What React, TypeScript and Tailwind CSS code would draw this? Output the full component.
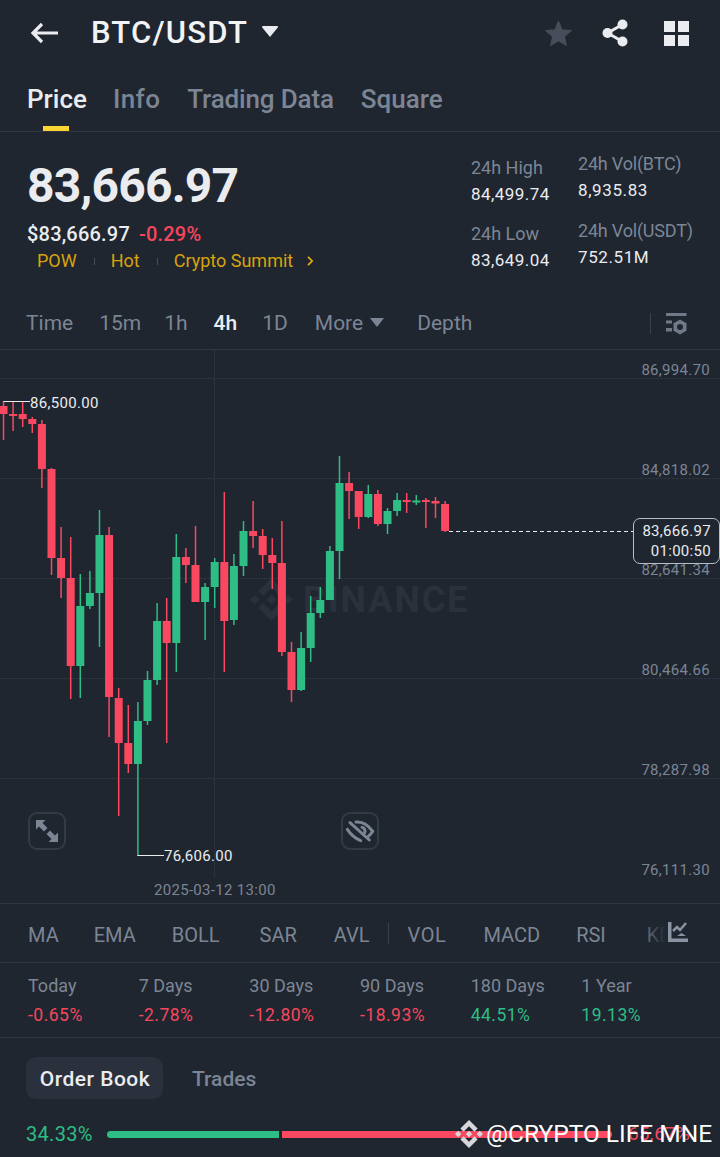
// App.tsx
const font = { fontFamily: "Roboto, 'Noto Sans', sans-serif" };

// [wickTop, wickBottom, bodyTop, bodyBottom, colour]
type Candle = [number, number, number, number, "r" | "g"];
const candles: Candle[] = [
  [401, 440, 406, 414, "r"],
  [402, 431, 414, 416, "r"],
  [401, 427, 414, 419, "r"],
  [417, 433, 419, 424, "r"],
  [420, 488, 424, 469, "r"],
  [468, 575, 469, 558, "r"],
  [527, 598, 558, 578, "r"],
  [537, 699, 578, 666, "r"],
  [574, 698, 606, 666, "g"],
  [571, 609, 593, 606, "g"],
  [510, 647, 535, 593, "g"],
  [527, 737, 535, 697, "r"],
  [688, 816, 698, 743, "r"],
  [705, 773, 743, 764, "r"],
  [702, 856, 721, 764, "g"],
  [671, 725, 680, 721, "g"],
  [603, 685, 621, 680, "g"],
  [598, 743, 621, 643, "r"],
  [534, 672, 557, 643, "g"],
  [548, 583, 557, 565, "r"],
  [526, 602, 565, 602, "r"],
  [583, 640, 587, 602, "g"],
  [558, 608, 562, 587, "g"],
  [492, 672, 562, 621, "r"],
  [554, 625, 566, 620, "g"],
  [521, 576, 531, 566, "g"],
  [501, 548, 531, 536, "r"],
  [529, 569, 536, 555, "r"],
  [538, 589, 555, 563, "r"],
  [521, 656, 563, 652, "r"],
  [642, 702, 652, 690, "r"],
  [632, 691, 648, 690, "g"],
  [596, 662, 613, 648, "g"],
  [587, 618, 600, 613, "g"],
  [546, 600, 551, 600, "g"],
  [456, 579, 483, 551, "g"],
  [472, 519, 483, 491, "r"],
  [491, 529, 491, 517, "r"],
  [485, 518, 494, 517, "g"],
  [490, 526, 494, 524, "r"],
  [508, 534, 511, 524, "g"],
  [493, 516, 500, 511, "g"],
  [493, 513, 500, 502, "r"],
  [495, 505, 500.5, 502.5, "g"],
  [498, 528, 500, 502, "r"],
  [497, 518, 501, 503.5, "r"],
  [501, 532, 504, 531, "r"],
];

const axisLabels = [
  { label: "86,994.70", y: "top-[11px]" },
  { label: "84,818.02", y: "top-[111px]" },
  { label: "82,641.34", y: "top-[211px]" },
  { label: "80,464.66", y: "top-[311px]" },
  { label: "78,287.98", y: "top-[411px]" },
  { label: "76,111.30", y: "top-[511px]" },
];

const stats = [
  { name: "Today", value: "-0.65%", up: false },
  { name: "7 Days", value: "-2.78%", up: false },
  { name: "30 Days", value: "-12.80%", up: false },
  { name: "90 Days", value: "-18.93%", up: false },
  { name: "180 Days", value: "44.51%", up: true },
  { name: "1 Year", value: "19.13%", up: true },
];

const BinanceLogo = ({ className }: { className: string }) => (
  <svg viewBox="0 0 126.61 126.61" className={className} fill="currentColor">
    <path d="M38.73 53.2l24.59-24.58 24.6 24.6 14.3-14.31L63.32 0 24.43 38.9z" />
    <path d="M0 63.31l14.3-14.31 14.31 14.31-14.31 14.3z" />
    <path d="M38.73 73.41l24.59 24.59 24.6-24.6 14.31 14.29-38.9 38.91-38.91-38.88z" />
    <path d="M98 63.31L112.3 49l14.31 14.3-14.31 14.32z" />
    <path d="M77.83 63.3L63.32 48.78 52.59 59.51l-1.24 1.23-2.54 2.54 14.51 14.52 14.51-14.47z" />
  </svg>
);

const Header = () => (
  <div className="flex h-[66px] items-center pl-[30px] pr-[31px]">
    <svg viewBox="0 0 28 22" className="h-[22px] w-[28px] text-[#eaecef]" fill="none" stroke="currentColor" strokeWidth="3.2">
      <path d="M28 11H3M12 2l-9 9 9 9" />
    </svg>
    <span className="ml-[33px] text-[31px] font-medium tracking-[1.2px] text-[#f2f3f5]">BTC/USDT</span>
    <svg viewBox="0 0 16 11" className="ml-[14px] mb-[3px] h-[11px] w-[16px] text-[#eaecef]" fill="currentColor">
      <path d="M1 0h14a1 1 0 01.8 1.600L8 11 .2 1.600A1 1 0 011 0z" />
    </svg>
    <div className="ml-auto flex items-center">
      <svg viewBox="0 0 24 24" className="h-[29px] w-[29px] text-[#474d5a]" fill="currentColor" stroke="currentColor" strokeWidth="1" strokeLinejoin="round">
        <path d="M12 2l3 7 7.500.6-5.700 4.900 1.700 7.300L12 18l-6.500 3.800 1.700-7.300L1.500 9.600 9 9z" />
      </svg>
      <svg viewBox="0 0 26 28" className="ml-[29px] h-[28px] w-[26px] text-[#eaecef]" fill="currentColor">
        <circle cx="20.500" cy="5.500" r="5" />
        <circle cx="5.500" cy="14" r="5" />
        <circle cx="20.500" cy="22.500" r="5" />
        <path d="M5.500 14L20.500 5.500M5.500 14l15 8.500" stroke="currentColor" strokeWidth="3" />
      </svg>
      <div className="ml-[36px] grid grid-cols-2 gap-[3px]">
        <div className="h-[11px] w-[11px] bg-[#eaecef]" />
        <div className="h-[11px] w-[11px] bg-[#eaecef]" />
        <div className="h-[11px] w-[11px] bg-[#eaecef]" />
        <div className="h-[11px] w-[11px] bg-[#eaecef]" />
      </div>
    </div>
  </div>
);

const Tabs = () => (
  <div className="flex h-[66px] border-b border-[#2f3642] pl-[27px] text-[26px] font-medium text-[#7c8594]">
    <div className="relative pt-[14px] text-[#eaecef]">
      Price
      <div className="absolute bottom-[0px] left-[16px] h-[5px] w-[26px] bg-[#fcd535]" />
    </div>
    <div className="ml-[26px] pt-[14px] tracking-[0.4px]">Info</div>
    <div className="ml-[27px] pt-[14px] tracking-[-0.15px]">Trading Data</div>
    <div className="ml-[27px] pt-[14px]">Square</div>
  </div>
);

const Summary = () => (
  <div className="flex h-[166px]">
    <div className="w-[471px] pl-[27px]">
      <div className="mt-[21px] text-[48px] leading-[66px] font-bold tracking-[-0.8px] text-[#eaecef]">83,666.97</div>
      <div className="mt-[2px] flex items-center text-[20px] leading-[26px] font-medium tracking-[0.2px]">
        <span className="text-[#eaecef]">$83,666.97</span>
        <span className="ml-[9px] text-[#f6465d]">-0.29%</span>
      </div>
      <div className="mt-[2px] flex items-center pl-[10px] text-[18px] leading-[24px] text-[#d9a20d]">
        <span>POW</span>
        <div className="ml-[17px] h-[7px] w-px bg-[#474d5a]" />
        <span className="ml-[16px]">Hot</span>
        <div className="ml-[17px] h-[7px] w-px bg-[#474d5a]" />
        <span className="ml-[16px]">Crypto Summit</span>
        <svg viewBox="0 0 8 12" className="ml-[14px] h-[10px] w-[7px]" fill="none" stroke="#e8ae12" strokeWidth="2">
          <path d="M1 1l5 5-5 5" />
        </svg>
      </div>
    </div>
    <div className="w-[107px] pt-[24px]">
      <div className="text-[18px] leading-[24px] text-[#7c8594]">24h High</div>
      <div className="mt-[2px] text-[17px] leading-[24px] tracking-[0.45px] text-[#eaecef]">84,499.74</div>
      <div className="mt-[16px] text-[18px] leading-[24px] text-[#7c8594]">24h Low</div>
      <div className="mt-[2px] text-[17px] leading-[24px] tracking-[0.45px] text-[#eaecef]">83,649.04</div>
    </div>
    <div className="pt-[20px]">
      <div className="text-[18px] leading-[24px] tracking-[-0.2px] text-[#7c8594]">24h Vol(BTC)</div>
      <div className="mt-[2px] text-[17px] leading-[24px] tracking-[0.6px] text-[#eaecef]">8,935.83</div>
      <div className="mt-[17px] text-[18px] leading-[24px] tracking-[-0.2px] text-[#7c8594]">24h Vol(USDT)</div>
      <div className="mt-[2px] text-[17px] leading-[24px] tracking-[0.6px] text-[#eaecef]">752.51M</div>
    </div>
  </div>
);

const ChartToolbar = () => (
  <div className="flex h-[52px] items-center border-b border-[#2f3642] pl-[26px] text-[21px] text-[#7c8594]">
    <span>Time</span>
    <span className="ml-[26px]">15m</span>
    <span className="ml-[23px]">1h</span>
    <span className="ml-[26px] font-medium text-[#eaecef]">4h</span>
    <span className="ml-[25px]">1D</span>
    <span className="ml-[27px]">More</span>
    <svg viewBox="0 0 14 9" className="ml-[7px] mb-[3px] h-[9px] w-[14px]" fill="#7c8594">
      <path d="M0 0h14L7 9z" />
    </svg>
    <span className="ml-[33px]">Depth</span>
    <div className="ml-auto h-[21px] w-px bg-[#3a414e]" />
    <svg viewBox="0 0 21 22" className="ml-[15px] mr-[33px] h-[22px] w-[21px]" fill="#717988">
      <path d="M0 0h20.500v3H0zM0 7.500h6v3H0zM0 15h6v3.500H0z" />
      <path fillRule="evenodd" d="M14 6.500l6.500 3.750v7.500L14 21.500l-6.500-3.750v-7.500zM14 11a3 3 0 100 6 3 3 0 000-6z" />
    </svg>
  </div>
);

const Chart = () => (
  <div className="relative h-[528px]">
    <div className="absolute left-[250px] top-[228px] flex items-center text-[#2b313c]">
      <BinanceLogo className="h-[43px] w-[43px]" />
      <span className="ml-[10px] text-[36px] leading-[36px] font-bold tracking-[2px]">BINANCE</span>
    </div>
    <svg viewBox="0 350 720 528" className="absolute inset-0 h-[528px] w-[720px]">
      {[378.500, 478.500, 578.500, 678.500, 778.500, 878.500].map((y) => (
        <line key={y} x1="0" x2="720" y1={y} y2={y} stroke="#2f3642" strokeWidth="1" strokeDasharray="3 1" />
      ))}
      <line x1="214.500" x2="214.500" y1="350" y2="878" stroke="#2f3642" strokeWidth="1" strokeDasharray="3 1" />
      {candles.map(([wt, wb, bt, bb, c], i) => {
        const x = 3.500 + i * 9.600;
        const color = c === "r" ? "#fb4861" : "#2ebd85";
        return (
          <g key={i}>
            <rect x={x - 0.750} y={wt} width="1.500" height={wb - wt} fill={color} />
            <rect x={x - 4} y={bt} width="8" height={bb - bt} fill={color} />
          </g>
        );
      })}
      <path d="M3.500 401.500H30" stroke="#eaecef" strokeWidth="1" fill="none" />
      <path d="M137.500 855.500H164" stroke="#eaecef" strokeWidth="1" fill="none" />
      <path d="M449 531.500H633" stroke="#eaecef" strokeWidth="1" strokeDasharray="4 3" fill="none" />
    </svg>
    {axisLabels.map((a) => (
      <div key={a.label} className={`absolute right-[10px] text-[15px] leading-[18px] tracking-[0.3px] text-[#7c8594] ${a.y}`}>
        {a.label}
      </div>
    ))}
    <div className="absolute left-[30px] top-[44px] text-[15px] leading-[18px] tracking-[0.3px] text-[#eaecef]">86,500.00</div>
    <div className="absolute left-[164px] top-[497px] text-[15px] leading-[18px] tracking-[0.3px] text-[#eaecef]">76,606.00</div>
    <div className="absolute left-[633px] top-[168px] flex h-[46px] w-[87px] flex-col items-end justify-center rounded-[7px] border border-[#b7bdc6] bg-[#1f2630] pr-[8px] text-[15px] leading-[20px] tracking-[0.3px] text-[#eaecef]">
      <div>83,666.97</div>
      <div>01:00:50</div>
    </div>
    <div className="absolute left-[28px] top-[462px] flex h-[38px] w-[38px] items-center justify-center rounded-[9px] border-2 border-[#333a46]">
      <svg viewBox="0 0 22 22" className="h-[22px] w-[22px]" fill="#7c8594">
        <path d="M0 0h9.500L6.500 3l5 5L8 11.500l-5-5-3 3z" />
        <path d="M22 22h-9.500l3-3-5-5 3.500-3.500 5 5 3-3z" />
      </svg>
    </div>
    <div className="absolute left-[341px] top-[462px] h-[38px] w-[38px] rounded-[9px] border-2 border-[#333a46]">
      <svg viewBox="39 26 102 102" className="h-[34px] w-[34px]" fill="none" stroke="#7c8594" strokeWidth="9" strokeLinecap="round">
        <path d="M60 52L118 104" />
        <path d="M78 50Q106 47 128 78" />
        <path d="M128 78Q122 88 114 94" />
        <path d="M52 72Q68 96 92 106" />
        <path d="M96 66Q108 70 104 82" />
      </svg>
    </div>
  </div>
);

const DateRow = () => (
  <div className="relative h-[26px] border-b border-[#2f3642]">
    <div className="absolute left-[154px] top-[3px] text-[15px] leading-[18px] tracking-[0.3px] text-[#7c8594]">2025-03-12 13:00</div>
  </div>
);

const Indicators = () => (
  <div className="relative flex h-[59px] items-center overflow-hidden border-b border-[#2f3642] pl-[28px] pt-[4px] text-[20px] text-[#7c8594]">
    <span>MA</span>
    <span className="ml-[35px]">EMA</span>
    <span className="ml-[36px]">BOLL</span>
    <span className="ml-[40px]">SAR</span>
    <span className="ml-[37px]">AVL</span>
    <div className="ml-[19px] mb-[4px] h-[21px] w-px bg-[#3a414e]" />
    <span className="ml-[18px] tracking-[0.6px]">VOL</span>
    <span className="ml-[37px]">MACD</span>
    <span className="ml-[36px]">RSI</span>
    <span className="ml-[41px]">KDJ</span>
    <div className="absolute right-[54px] top-0 h-full w-[22px] bg-gradient-to-r from-[#1f2630]/20 to-[#1f2630]" />
    <div className="absolute right-0 top-0 flex h-full w-[54px] items-center bg-[#1f2630] pl-[2px]">
      <svg viewBox="0 0 20 20" className="mb-[3px] h-[20px] w-[20px]" fill="none" stroke="#8a93a2" strokeWidth="3.500">
        <path d="M1.750 0v18.250H20" />
        <path d="M5 9l4-4 3 3 6-7" strokeWidth="2.500" />
        <path d="M9 14l4.500-3 4.500 3z" fill="#8a93a2" stroke="none" />
      </svg>
    </div>
  </div>
);

const Stats = () => (
  <div className="flex h-[75px] flex-col justify-center border-b border-[#2f3642] pl-[28px]">
    <div className="grid w-[664px] grid-cols-6">
      {stats.map((s) => (
        <div key={s.name}>
          <div className="text-[18px] leading-[24px] text-[#7c8594]">{s.name}</div>
          <div className={s.up ? "mt-[5px] text-[17.500px] leading-[24px] tracking-[0.5px] text-[#2ebd85]" : "mt-[5px] text-[17.500px] leading-[24px] tracking-[0.5px] text-[#f6465d]"}>
            {s.value}
          </div>
        </div>
      ))}
    </div>
  </div>
);

const OrderBook = () => (
  <div className="px-[26px] pt-[19px]">
    <div className="flex items-center">
      <div className="flex h-[42px] w-[137px] items-center justify-center rounded-[10px] bg-[#2a303c] pl-[1px] pt-[3px] text-[21px] font-medium tracking-[0.5px] text-[#eaecef]">
        Order Book
      </div>
      <span className="ml-[29px] pt-[3px] text-[21px] font-medium text-[#7c8594]">Trades</span>
    </div>
    <div className="mt-[22px] flex items-center">
      <span className="w-[66px] text-[20px] leading-[26px] tracking-[0.3px] text-[#2ebd85]">34.33%</span>
      <div className="ml-[15px] flex h-[7px] w-[505px] gap-[3px]">
        <div className="h-full w-[172px] rounded-l-full bg-[#2ebd85]" />
        <div className="h-full flex-1 rounded-r-full bg-[#fb4861]" />
      </div>
      <span className="ml-[16px] text-[19px] leading-[26px] text-[#f6465d]">65.67%</span>
    </div>
  </div>
);

export default function App() {
  return (
    <div className="relative h-[1157px] w-[720px] overflow-hidden bg-[#1f2630]" style={font}>
      <Header />
      <Tabs />
      <Summary />
      <ChartToolbar />
      <Chart />
      <DateRow />
      <Indicators />
      <Stats />
      <OrderBook />
      <div className="absolute bottom-[7px] left-[455px] flex items-center text-white">
        <BinanceLogo className="h-[28px] w-[28px] text-[#d5d7da]" />
        <span className="ml-[3px] text-[24.500px] leading-[32px]">@CRYPTO LIFE MNE</span>
      </div>
    </div>
  );
}
